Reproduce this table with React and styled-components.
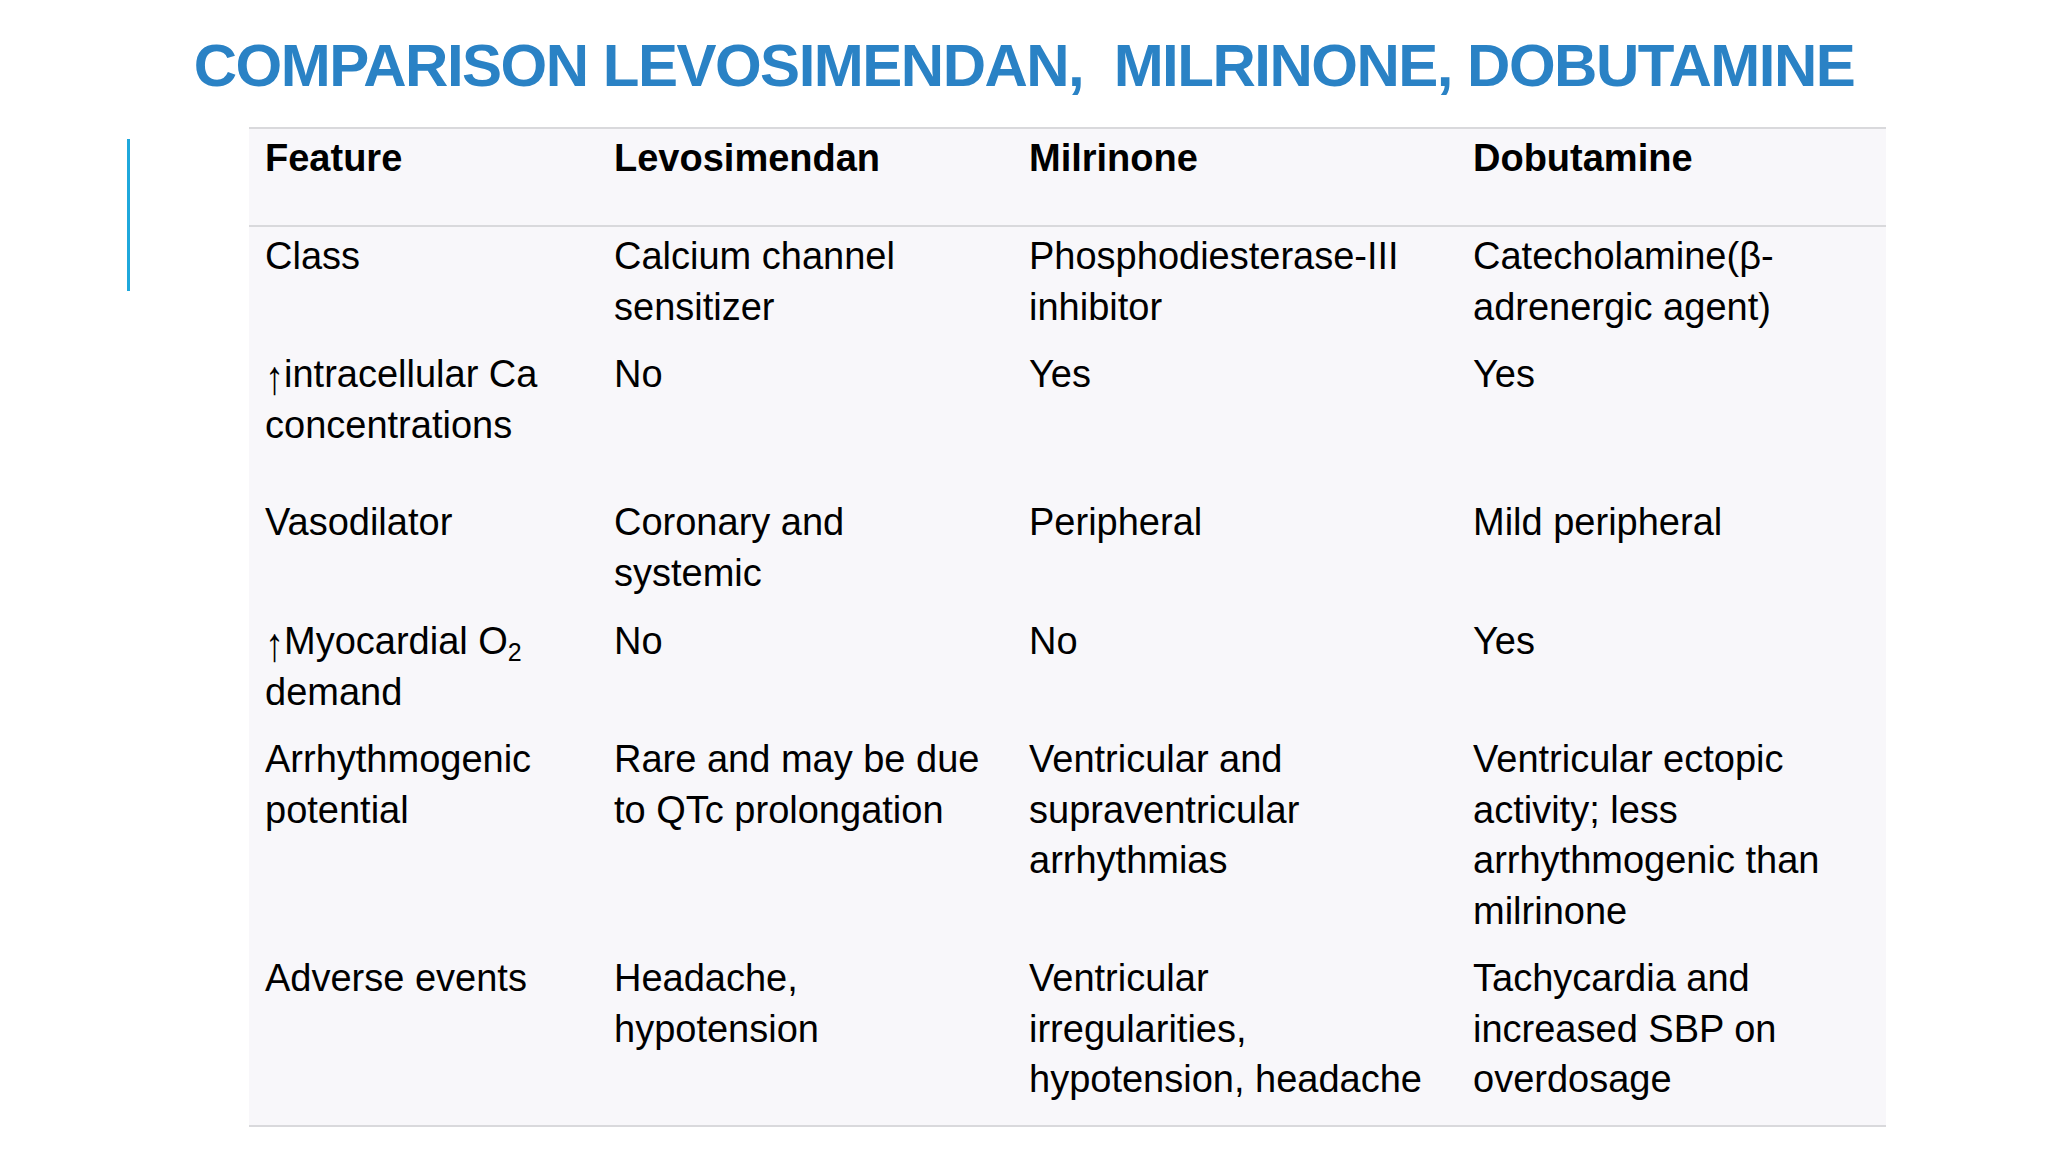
import styled, { createGlobalStyle } from "styled-components";

const GlobalStyle = createGlobalStyle`
  html, body {
    margin: 0;
    padding: 0;
    background: #ffffff;
  }
  body {
    font-family: "Liberation Sans", Arial, sans-serif;
    color: #000;
  }
`;

const Slide = styled.div`
  width: 2048px;
  height: 1152px;
  box-sizing: border-box;
  padding-top: 36px;
  background: #fff;
  overflow: hidden;
`;

const Title = styled.h1`
  margin: 0;
  font-family: "Liberation Sans", Arial, sans-serif;
  font-weight: 700;
  font-size: 60px;
  line-height: 60px;
  letter-spacing: -1.5px;
  color: #2a82c5;
  text-align: center;
  white-space: nowrap;
`;

const Body = styled.div`
  display: flex;
  align-items: flex-start;
  margin-top: 31px;
`;

const AccentBar = styled.div`
  flex: none;
  width: 3px;
  height: 152px;
  margin: 12px 0 0 127px;
  background: #1fa8dc;
`;

const Table = styled.div`
  flex: none;
  width: 1637px;
  margin-left: 119px;
  background: #f8f7fa;
  border-top: 2px solid #d9d9dc;
  border-bottom: 2px solid #d9d9dc;
`;

const grid = `
  display: grid;
  grid-template-columns: 349px 415px 444px 429px;
  box-sizing: border-box;
`;

const HeaderRow = styled.div`
  ${grid}
  height: 98px;
  border-bottom: 2px solid #d9d9dc;
`;

const Row = styled.div`
  ${grid}
  height: ${(p) => p.$height}px;
`;

const Cell = styled.div`
  padding: 4px 26px 0 16px;
  font-size: 38px;
  line-height: 50.5px;
  color: #000;
`;

const HeadCell = styled(Cell)`
  font-weight: 700;
`;

// the slide's arrow is taller than the font's own glyph and reaches below the baseline
const Arrow = styled.span`
  display: inline-block;
  transform: scaleY(1.25);
  transform-origin: 50% 10px;
`;

const Sub = styled.span`
  font-size: 25px;
  line-height: 0;
  vertical-align: -7px;
`;

const columns = ["Feature", "Levosimendan", "Milrinone", "Dobutamine"];

// row heights taken from the slide, rows do not share one height
const rows = [
  {
    height: 118,
    cells: ["Class", "Calcium channel sensitizer", "Phosphodiesterase-III inhibitor", "Catecholamine(β-adrenergic agent)"],
  },
  {
    height: 148,
    cells: [
      <>
        <Arrow>↑</Arrow>intracellular Ca concentrations
      </>,
      "No",
      "Yes",
      "Yes",
    ],
  },
  {
    height: 119,
    cells: ["Vasodilator", "Coronary and systemic", "Peripheral", "Mild peripheral"],
  },
  {
    height: 118,
    cells: [
      <>
        <Arrow>↑</Arrow>Myocardial O<Sub>2</Sub> demand
      </>,
      "No",
      "No",
      "Yes",
    ],
  },
  {
    height: 219,
    cells: [
      "Arrhythmogenic potential",
      "Rare and may be due to QTc prolongation",
      "Ventricular and supraventricular arrhythmias",
      "Ventricular ectopic activity; less arrhythmogenic than milrinone",
    ],
  },
  {
    height: 176,
    cells: [
      "Adverse events",
      "Headache, hypotension",
      "Ventricular irregularities, hypotension, headache",
      "Tachycardia and increased SBP on overdosage",
    ],
  },
];

const App = () => {
  return (
    <>
      <GlobalStyle />
      <Slide>
        <Title>COMPARISON LEVOSIMENDAN,&nbsp; MILRINONE, DOBUTAMINE</Title>
        <Body>
          <AccentBar />
          <Table>
            <HeaderRow>
              {columns.map((c) => (
                <HeadCell key={c}>{c}</HeadCell>
              ))}
            </HeaderRow>
            {rows.map((row, i) => (
              <Row key={i} $height={row.height}>
                {row.cells.map((cell, j) => (
                  <Cell key={j}>{cell}</Cell>
                ))}
              </Row>
            ))}
          </Table>
        </Body>
      </Slide>
    </>
  );
};

export default App;
